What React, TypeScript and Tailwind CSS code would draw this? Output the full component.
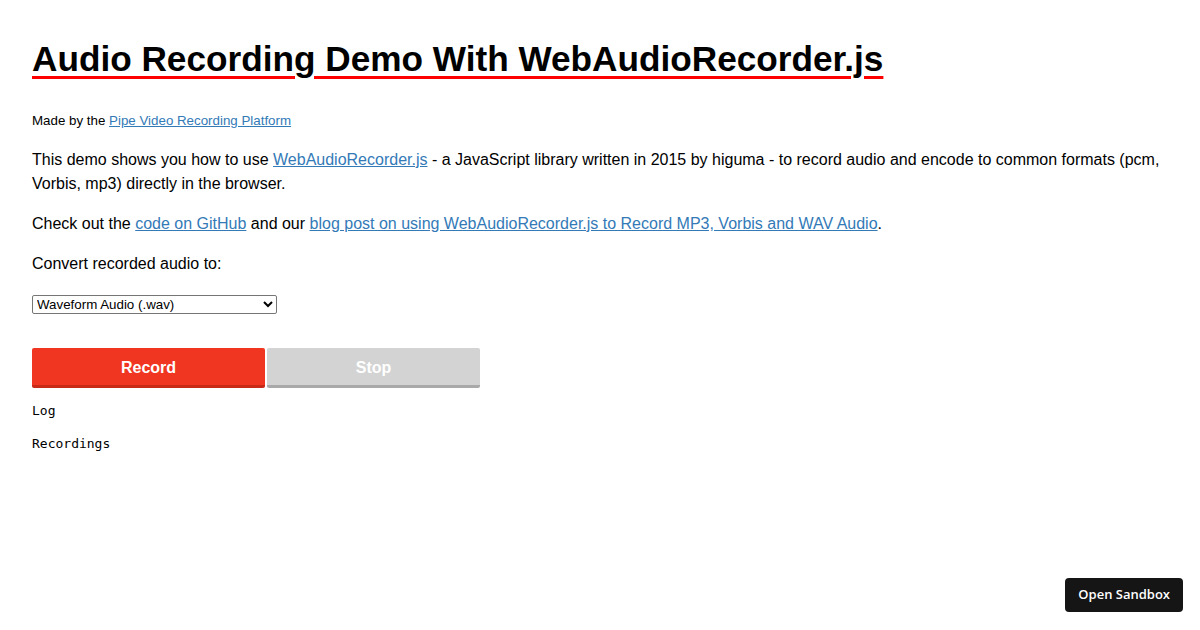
import React from "react";

export default function App() {
  const sans = { fontFamily: '"Liberation Sans", Arial, sans-serif' };
  return (
    <div className="relative w-[1200px] h-[630px] bg-white text-black overflow-hidden" style={sans}>
      <div className="px-8 pt-[35px]">
        <h1 className="text-[35.2px] leading-[48px] font-bold underline decoration-[#ff0000] decoration-[3px] underline-offset-[5px] m-0">
          Audio Recording Demo With WebAudioRecorder.js
        </h1>
        <p className="mt-[29px] text-[13.33px] leading-[18px]">
          Made by the{" "}
          <a href="#" className="text-[#337ab7] underline">
            Pipe Video Recording Platform
          </a>
        </p>
        <p className="mt-[18px] text-[16px] leading-[24px]">
          This demo shows you how to use{" "}
          <a href="#" className="text-[#337ab7] underline">
            WebAudioRecorder.js
          </a>{" "}
          - a JavaScript library written in 2015 by higuma - to record audio and encode to common formats (pcm, Vorbis, mp3) directly in the browser.
        </p>
        <p className="mt-4 text-[16px] leading-[24px]">
          Check out the{" "}
          <a href="#" className="text-[#337ab7] underline">
            code on GitHub
          </a>{" "}
          and our{" "}
          <a href="#" className="text-[#337ab7] underline">
            blog post on using WebAudioRecorder.js to Record MP3, Vorbis and WAV Audio
          </a>
          .
        </p>
        <p className="mt-4 text-[16px] leading-[24px]">Convert recorded audio to:</p>
        <div className="mt-[19px]">
          <select
            className="block w-[245px] h-[19px] border border-[#767676] rounded-[2px] bg-white text-[13.33px] leading-[15px] px-0 text-black"
            style={sans}
            defaultValue="wav"
          >
            <option value="wav">Waveform Audio (.wav)</option>
            <option value="ogg">Ogg Vorbis (.ogg)</option>
            <option value="mp3">MP3 (MPEG-1 Audio Layer III) (.mp3)</option>
          </select>
        </div>
        <div className="mt-[34px] flex gap-[2px]">
          <button
            className="w-[233px] h-[40px] pt-[2px] bg-[#f03520] border-b-[3px] border-[#c92a18] rounded-[2px] text-white font-bold text-[16px]"
            style={sans}
          >
            Record
          </button>
          <button
            className="w-[213px] h-[40px] pt-[2px] bg-[#d3d3d3] border-b-[3px] border-[#a9a9a9] rounded-[2px] text-white font-bold text-[16px]"
            style={sans}
          >
            Stop
          </button>
        </div>
        <div
          className="mt-[14px] text-[13px] leading-[17px]"
          style={{ fontFamily: '"DejaVu Sans Mono", monospace' }}
        >
          Log
        </div>
        <div
          className="mt-[16px] text-[13px] leading-[17px]"
          style={{ fontFamily: '"DejaVu Sans Mono", monospace' }}
        >
          Recordings
        </div>
      </div>
      <div
        className="absolute right-[17px] bottom-[18px] h-[34px] px-[13px] flex items-center bg-[#151515] text-white text-[13px] font-semibold rounded-[4px]"
        style={{ fontFamily: '"Open Sans", "Noto Sans", sans-serif' }}
      >
        Open Sandbox
      </div>
    </div>
  );
}
